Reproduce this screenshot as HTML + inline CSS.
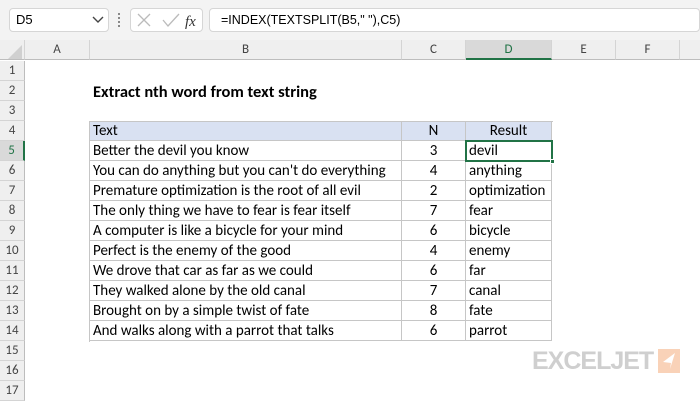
<!DOCTYPE html><html><head><style>
*{margin:0;padding:0;box-sizing:border-box}
body{width:700px;height:400px;overflow:hidden;background:#fff;font-family:Calibri,"Carlito","Liberation Sans",sans-serif;position:relative;font-size:15px;color:#000}
.a{position:absolute}
.ch{position:absolute;top:40px;height:20px;background:#efefef;border-right:1px solid #d4d4d4;border-bottom:1px solid #bdbdbd;text-align:center;line-height:19px;color:#444;font-size:13px}
.rh{position:absolute;left:0;width:25px;height:20px;background:#efefef;border-bottom:1px solid #d4d4d4;border-right:1px solid #bdbdbd;text-align:center;line-height:20px;color:#444;font-size:13px}
.c{position:absolute;height:20px;line-height:20px;border-right:1px solid #c6c6c6;border-bottom:1px solid #c6c6c6;padding-left:3px;white-space:nowrap;overflow:hidden}
#g{position:absolute;left:0;top:1px;width:700px;height:400px}
</style></head><body>
<div class="a" style="left:0;top:0;width:700px;height:40px;background:#f3f3f3"></div>
<div class="a" style="left:9px;top:8px;width:100px;height:24px;background:#fff;border:1px solid #d6d6d6;border-radius:4px;font-size:13px;line-height:22px;padding-left:6px;font-family:'Liberation Sans',sans-serif">D5
<svg class="a" style="left:82px;top:7px" width="12" height="8"><path d="M1 1 L6 6 L11 1" stroke="#444" stroke-width="1.4" fill="none"/></svg></div>
<div class="a" style="left:118px;top:13px;width:2px;height:14px;border-left:2px dotted #888"></div>
<div class="a" style="left:130px;top:8px;width:73px;height:24px;background:#fff;border:1px solid #d6d6d6;border-radius:4px"></div>
<svg class="a" style="left:135px;top:12px" width="70" height="18"><path d="M3 2 L15 14 M15 2 L3 14" stroke="#bbb" stroke-width="1.3"/><path d="M28 8 L33 14 L44 2" stroke="#bbb" stroke-width="1.3" fill="none"/><text x="50" y="14" font-family="Liberation Serif" font-style="italic" font-size="15" fill="#333">fx</text></svg>
<div class="a" style="left:209px;top:8px;width:491px;height:24px;background:#fff;border:1px solid #d6d6d6;border-radius:4px;font-size:12.5px;line-height:22px;padding-left:11px;font-family:'Liberation Sans',sans-serif">=INDEX(TEXTSPLIT(B5," "),C5)</div>
<div class="ch" style="left:0;width:25px"></div>
<svg class="a" style="left:8px;top:45px" width="14" height="14"><path d="M14 0 L14 14 L0 14Z" fill="#d0d0d0"/></svg>
<div class="ch" style="left:25px;width:65px">A</div>
<div class="ch" style="left:90px;width:312px">B</div>
<div class="ch" style="left:402px;width:64px">C</div>
<div class="ch" style="left:466px;width:86px;background:#d9d9d9;border-bottom:2px solid #217346;color:#217346">D</div>
<div class="ch" style="left:552px;width:64px">E</div>
<div class="ch" style="left:616px;width:64px">F</div>
<div class="ch" style="left:680px;width:30px"></div>
<div id="g">
<div class="rh" style="top:60px">1</div><div class="rh" style="top:80px">2</div><div class="rh" style="top:100px">3</div><div class="rh" style="top:120px">4</div>
<div class="rh" style="top:140px;background:#d9d9d9;border-right:2px solid #217346;color:#217346">5</div>
<div class="rh" style="top:160px">6</div><div class="rh" style="top:180px">7</div><div class="rh" style="top:200px">8</div><div class="rh" style="top:220px">9</div><div class="rh" style="top:240px">10</div><div class="rh" style="top:260px">11</div><div class="rh" style="top:280px">12</div><div class="rh" style="top:300px">13</div><div class="rh" style="top:320px">14</div><div class="rh" style="top:340px">15</div><div class="rh" style="top:360px">16</div><div class="rh" style="top:380px">17</div>
<div class="a" style="left:93px;top:81px;font-weight:bold;font-size:16.5px;line-height:20px">Extract nth word from text string</div>
<div class="a" style="left:89px;top:120px;width:464px;height:221px;border-left:1px solid #c6c6c6;border-top:1px solid #c6c6c6"></div>
<div class="c" style="left:90px;top:121px;width:312px;height:19px;line-height:19px;background:#d9e1f2">Text</div>
<div class="c" style="left:402px;top:121px;width:64px;height:19px;line-height:19px;background:#d9e1f2;text-align:center;padding:0">N</div>
<div class="c" style="left:466px;top:121px;width:86px;height:19px;line-height:19px;background:#d9e1f2;text-align:center;padding:0">Result</div>
<div class="c" style="left:90px;top:140px;width:312px">Better the devil you know</div><div class="c" style="left:402px;top:140px;width:64px;text-align:center;padding:0">3</div><div class="c" style="left:466px;top:140px;width:86px">devil</div>
<div class="c" style="left:90px;top:160px;width:312px">You can do anything but you can't do everything</div><div class="c" style="left:402px;top:160px;width:64px;text-align:center;padding:0">4</div><div class="c" style="left:466px;top:160px;width:86px">anything</div>
<div class="c" style="left:90px;top:180px;width:312px">Premature optimization is the root of all evil</div><div class="c" style="left:402px;top:180px;width:64px;text-align:center;padding:0">2</div><div class="c" style="left:466px;top:180px;width:86px">optimization</div>
<div class="c" style="left:90px;top:200px;width:312px">The only thing we have to fear is fear itself</div><div class="c" style="left:402px;top:200px;width:64px;text-align:center;padding:0">7</div><div class="c" style="left:466px;top:200px;width:86px">fear</div>
<div class="c" style="left:90px;top:220px;width:312px">A computer is like a bicycle for your mind</div><div class="c" style="left:402px;top:220px;width:64px;text-align:center;padding:0">6</div><div class="c" style="left:466px;top:220px;width:86px">bicycle</div>
<div class="c" style="left:90px;top:240px;width:312px">Perfect is the enemy of the good</div><div class="c" style="left:402px;top:240px;width:64px;text-align:center;padding:0">4</div><div class="c" style="left:466px;top:240px;width:86px">enemy</div>
<div class="c" style="left:90px;top:260px;width:312px">We drove that car as far as we could</div><div class="c" style="left:402px;top:260px;width:64px;text-align:center;padding:0">6</div><div class="c" style="left:466px;top:260px;width:86px">far</div>
<div class="c" style="left:90px;top:280px;width:312px">They walked alone by the old canal</div><div class="c" style="left:402px;top:280px;width:64px;text-align:center;padding:0">7</div><div class="c" style="left:466px;top:280px;width:86px">canal</div>
<div class="c" style="left:90px;top:300px;width:312px">Brought on by a simple twist of fate</div><div class="c" style="left:402px;top:300px;width:64px;text-align:center;padding:0">8</div><div class="c" style="left:466px;top:300px;width:86px">fate</div>
<div class="c" style="left:90px;top:320px;width:312px">And walks along with a parrot that talks</div><div class="c" style="left:402px;top:320px;width:64px;text-align:center;padding:0">6</div><div class="c" style="left:466px;top:320px;width:86px">parrot</div>
<div class="a" style="left:465px;top:139px;width:88px;height:22px;border:2px solid #217346"></div>
<div class="a" style="left:550px;top:158px;width:5px;height:5px;background:#217346;border:1px solid #fff"></div>
<div class="a" style="left:532px;top:345px;font-family:'Liberation Sans',sans-serif;font-weight:bold;font-size:25px;color:#cfcfcf;letter-spacing:-1px;line-height:30px">EXCELJET</div>
<div class="a" style="left:658px;top:348px;width:22px;height:24px;background:#f9d2b8"></div>
<svg class="a" style="left:658px;top:348px" width="22" height="24"><path d="M17 4 L5 13 L13 14 L12 20Z" fill="#fff"/></svg>
</div>
</body></html>
